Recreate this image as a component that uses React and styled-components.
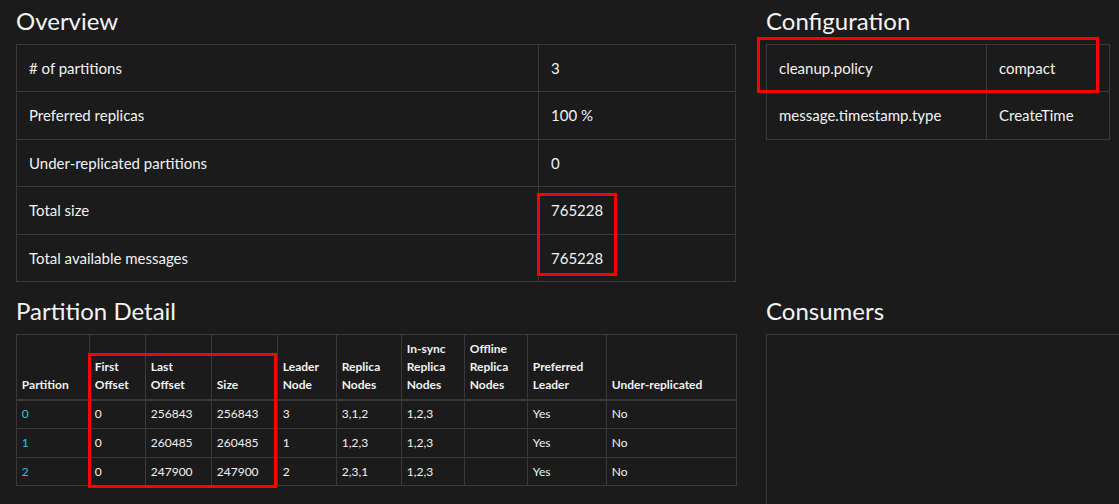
import React from 'react';
import styled, { createGlobalStyle, css } from 'styled-components';

const GlobalStyle = createGlobalStyle`
  html, body {
    margin: 0;
    background: #1b1b1b;
    color: #f2f2f2;
    font-family: Lato, "Noto Sans", sans-serif;
    overflow: hidden;
  }
  * { box-sizing: border-box; }
`;

const overview = [
  ['# of partitions', '3'],
  ['Preferred replicas', '100 %'],
  ['Under-replicated partitions', '0'],
  ['Total size', '765228'],
  ['Total available messages', '765228'],
];

const config = [
  ['cleanup.policy', 'compact'],
  ['message.timestamp.type', 'CreateTime'],
];

const partitions = [
  ['0', '0', '256843', '256843', '3', '3,1,2', '1,2,3', '', 'Yes', 'No'],
  ['1', '0', '260485', '260485', '1', '1,2,3', '1,2,3', '', 'Yes', 'No'],
  ['2', '0', '247900', '247900', '2', '2,3,1', '1,2,3', '', 'Yes', 'No'],
];

const headers = [
  'Partition',
  'First\nOffset',
  'Last\nOffset',
  'Size',
  'Leader\nNode',
  'Replica\nNodes',
  'In-sync\nReplica\nNodes',
  'Offline\nReplica\nNodes',
  'Preferred\nLeader',
  'Under-replicated',
];

const widths = [73, 56, 66, 66, 59, 65, 63, 63, 79, 130];

function App() {
  return (
    <>
      <GlobalStyle />
      <Page>
        <Section>
          <Heading>Overview</Heading>
          <Table>
            <colgroup>
              <col style={{ width: 522 }} />
              <col />
            </colgroup>
            <tbody>
              {overview.map(([k, v]) => (
                <tr key={k}>
                  <Cell>{k}</Cell>
                  <Cell>{v}</Cell>
                </tr>
              ))}
            </tbody>
          </Table>
          <Mark $left={521} $top={149} $width={80} $height={83} />
        </Section>

        <Section>
          <Heading>Configuration</Heading>
          <ConfigTable>
            <colgroup>
              <col style={{ width: 220 }} />
              <col style={{ width: 123 }} />
            </colgroup>
            <tbody>
              {config.map(([k, v]) => (
                <tr key={k}>
                  <Cell>{k}</Cell>
                  <Cell>{v}</Cell>
                </tr>
              ))}
            </tbody>
          </ConfigTable>
          <Mark $left={-9} $top={-7} $width={342} $height={56} />
        </Section>

        <Section>
          <Heading>Partition Detail</Heading>
          <SmallTable>
            <colgroup>
              {widths.map((w, i) => (
                <col key={i} style={{ width: w }} />
              ))}
            </colgroup>
            <thead>
              <tr>
                {headers.map((h) => (
                  <HeadCell key={h}>{h}</HeadCell>
                ))}
              </tr>
            </thead>
            <tbody>
              {partitions.map((row) => (
                <tr key={row[0]}>
                  {row.map((c, i) => (
                    <SmallCell key={i}>
                      {i === 0 ? <Link href="#">{c}</Link> : c}
                    </SmallCell>
                  ))}
                </tr>
              ))}
            </tbody>
          </SmallTable>
          <Mark $left={72} $top={19} $width={189} $height={135} />
        </Section>

        <Section>
          <Heading>Consumers</Heading>
          <EmptyBox />
        </Section>
      </Page>
    </>
  );
}

const Page = styled.div`
  display: grid;
  grid-template-columns: 720px 720px;
  align-items: start;
  column-gap: 30px;
  row-gap: 15px;
  padding: 7px 16px 0;
  width: 100vw;
  height: 100vh;
  overflow: hidden;
`;

const Section = styled.section`
  position: relative;
`;

const Heading = styled.h2`
  margin: 0 0 8px;
  font-size: 24px;
  font-weight: 400;
  line-height: 1.2;
  color: #f4f4f4;
`;

const tableBase = css`
  border-collapse: collapse;
  table-layout: fixed;
  color: #f2f2f2;
`;

const Table = styled.table`
  ${tableBase};
  width: 100%;
`;

const ConfigTable = styled.table`
  ${tableBase};
  width: 343px;
`;

const Cell = styled.td`
  border: 1px solid #3a3a3a;
  padding: 12px;
  font-size: 15px;
  line-height: 1.5;
  text-align: left;
  white-space: nowrap;
`;

const SmallTable = styled.table`
  ${tableBase};
  width: 100%;
`;

const HeadCell = styled.th`
  border: 1px solid #3a3a3a;
  border-bottom: 2px solid #3a3a3a;
  padding: 4.8px;
  font-size: 12px;
  line-height: 18px;
  font-weight: 700;
  text-align: left;
  vertical-align: bottom;
  white-space: pre-line;
`;

const SmallCell = styled.td`
  border: 1px solid #3a3a3a;
  padding: 4.8px;
  font-size: 12px;
  line-height: 18px;
  text-align: left;
`;

const Link = styled.a`
  color: #22c6e6;
  text-decoration: none;
`;

const EmptyBox = styled.div`
  width: 100%;
  height: 220px;
  border: 1px solid #3a3a3a;
`;

const Mark = styled.div`
  position: absolute;
  left: ${(p) => p.$left}px;
  top: calc(37px + ${(p) => p.$top}px);
  width: ${(p) => p.$width}px;
  height: ${(p) => p.$height}px;
  border: 3px solid #f00;
  pointer-events: none;
`;

export default App;
